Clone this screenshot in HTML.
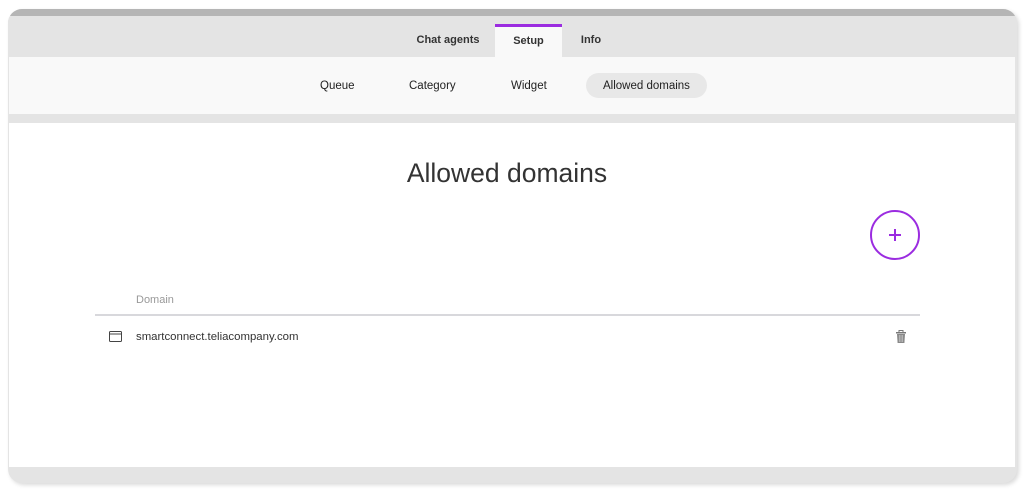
<!DOCTYPE html>
<html><head><meta charset="utf-8"><style>
*{margin:0;padding:0;box-sizing:border-box}
body{width:1024px;height:490px;background:#fff;font-family:"Liberation Sans",sans-serif;position:relative;overflow:hidden}
.win{position:absolute;left:8px;top:9px;width:1009px;height:474px;border-radius:14px;background:#e4e4e4;overflow:hidden;box-shadow:2px 2px 4px rgba(0,0,0,.15)}
.topbar{position:absolute;left:0;top:0;width:100%;height:7px;background:#b5b5b5}
.tabs{position:absolute;left:0;top:7px;width:100%;height:41px;background:#e4e4e4}
.tab{position:absolute;top:15px;font-size:11px;font-weight:bold;color:#333;height:33px;line-height:33px;text-align:center}
.sel{background:#f9f9f9;border-top:3px solid #9b2ce0;line-height:28px}
.sub{position:absolute;left:1px;top:48px;width:1006px;height:57px;background:#f9f9f9}
.si{position:absolute;top:16px;font-size:11.5px;color:#222;height:25px;line-height:26px}
.pill{background:#e8e8e8;border-radius:13px;padding:0 17px}
.content{position:absolute;left:1px;top:114px;width:1006px;height:344px;background:#fff}
h1{position:absolute;left:-5px;width:100%;top:35px;text-align:center;font-weight:normal;font-size:26.5px;color:#333}
.plus{position:absolute;left:861px;top:87px;width:50px;height:50px;border:2px solid #9b2ce0;border-radius:50%}
.plus:before{content:"";position:absolute;left:17px;top:22px;width:12px;height:2px;background:#9b2ce0}
.plus:after{content:"";position:absolute;left:22px;top:17px;width:2px;height:12px;background:#9b2ce0}
.hd{position:absolute;left:127px;top:171px;font-size:11px;color:#999}
.line{position:absolute;left:86px;top:191px;width:825px;height:2px;background:#d8d8dc}
.dom{position:absolute;left:127px;top:208px;font-size:11.4px;color:#333}
</style></head><body>
<div class="win">
<div class="topbar"></div>
<div class="tabs"></div>
<div class="tab" style="left:398px;width:84px">Chat agents</div>
<div class="tab sel" style="left:487px;width:67px">Setup</div>
<div class="tab" style="left:565px;width:36px">Info</div>
<div class="sub">
<div class="si" style="left:311px">Queue</div>
<div class="si" style="left:400px">Category</div>
<div class="si" style="left:502px">Widget</div>
<div class="si pill" style="left:577px">Allowed domains</div>
</div>
<div class="content">
<h1>Allowed domains</h1>
<div class="plus"></div>
<div class="hd">Domain</div>
<div class="line"></div>
<svg style="position:absolute;left:100px;top:208px" width="13" height="11" viewBox="0 0 13 11"><rect x="0.5" y="0.5" width="12" height="10" rx="1" fill="none" stroke="#444"/><line x1="0.5" y1="3" x2="12.5" y2="3" stroke="#444"/></svg>
<div class="dom">smartconnect.teliacompany.com</div>
<svg style="position:absolute;left:886px;top:207px" width="12" height="14" viewBox="0 0 12 14"><rect x="1" y="2" width="10" height="1.5" fill="#777"/><rect x="4" y="0.5" width="4" height="2" fill="none" stroke="#777" stroke-width="1"/><path d="M2 4h8l-.6 9H2.6z" fill="#888"/><path d="M4.3 5v7M6 5v7M7.7 5v7" stroke="#ccc" stroke-width=".7"/></svg>
</div>
</div>
</body></html>
